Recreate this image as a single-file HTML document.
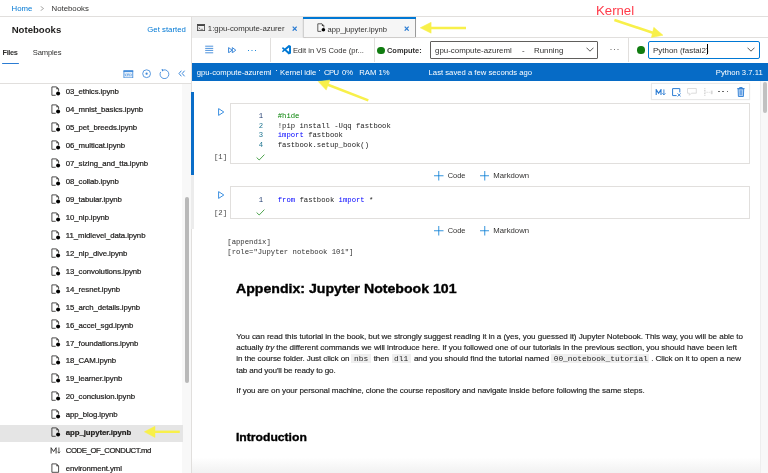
<!DOCTYPE html>
<html><head><meta charset="utf-8">
<style>
*{margin:0;padding:0;box-sizing:border-box}
html,body{width:768px;height:473px;overflow:hidden;background:#fff;font-family:"Liberation Sans",sans-serif;color:#323130}
.a{position:absolute;white-space:nowrap}
.wrap{position:absolute;left:0;top:0;width:768px;height:473px;will-change:transform;background:transparent}
.mono{font-family:"Liberation Mono",monospace}
.fl{font-size:7.8px;line-height:10px;color:#201f1e;letter-spacing:-0.08px;-webkit-text-stroke:0.22px #201f1e}
.code{font-family:"Liberation Mono",monospace;font-size:7.25px;line-height:9.5px;color:#222}
.ln{font-family:"Liberation Mono",monospace;font-size:7.25px;line-height:9.5px;color:#237893;text-align:right;width:12px}
.kw{color:#0000ff}
.cm{color:#008000}
.sb{font-size:7.7px;line-height:10px;color:#fff;margin-top:1.3px}
.md{font-size:8.1px;line-height:11px;color:#222;-webkit-text-stroke:0.15px #222}
.ic{font-family:"Liberation Mono",monospace;background:#efefef;padding:1px 3.3px;font-size:7.4px;letter-spacing:0.1px;-webkit-text-stroke:0}
</style></head><body><div class="wrap">
<!-- breadcrumb -->
<div class="a" style="left:11.5px;top:3.5px;font-size:7.8px;line-height:10px;color:#0078d4">Home</div>
<svg class="a" style="left:39.5px;top:5.7px" width="4.5" height="5" viewBox="0 0 4.5 5"><path d="M0.6 0.3L3.6 2.5L0.6 4.7" fill="none" stroke="#8a8886" stroke-width="0.7"/></svg>
<div class="a" style="left:51.5px;top:3.5px;font-size:7.8px;line-height:10px;color:#323130">Notebooks</div>
<div class="a" style="left:0;top:16px;width:768px;height:1px;background:#e1dfdd"></div>

<!-- sidebar -->
<div class="a" style="left:11.7px;top:23.8px;font-size:9.6px;line-height:12px;font-weight:bold;color:#201f1e">Notebooks</div>
<div class="a" style="left:147.3px;top:24.9px;font-size:7.8px;line-height:10px;color:#0078d4">Get started</div>
<div class="a" style="left:2.6px;top:48.3px;font-size:7.4px;line-height:10px;font-weight:bold;letter-spacing:-0.4px;color:#323130">Files</div>
<div class="a" style="left:32.8px;top:48.3px;font-size:7.6px;line-height:10px;color:#323130;letter-spacing:-0.15px">Samples</div>
<div class="a" style="left:2px;top:62.7px;width:16.5px;height:1.6px;background:#2b7cd3;border-radius:1px"></div>
<!-- sidebar icons -->
<svg class="a" style="left:123px;top:69.5px" width="10.5" height="8.5" viewBox="0 0 10.5 8.5"><rect x="0.9" y="0.9" width="8.9" height="7" fill="#e3eefa" stroke="#3b87d9" stroke-width="0.8"/><rect x="0.5" y="0.4" width="9.7" height="1.5" fill="#3b87d9"/><path d="M3.2 3.6L2 4.9L3.2 6.2M7.4 3.6L8.6 4.9L7.4 6.2M4.3 6.2V4.1H6.2V6.2" fill="none" stroke="#3b87d9" stroke-width="0.6"/></svg>
<svg class="a" style="left:141.5px;top:69.3px" width="9.5" height="9.5" viewBox="0 0 9.5 9.5"><circle cx="4.6" cy="4.7" r="3.9" fill="none" stroke="#3b87d9" stroke-width="0.85"/><circle cx="4.6" cy="4.7" r="1.1" fill="#3b87d9"/></svg>
<svg class="a" style="left:158.5px;top:68.8px" width="11" height="10.5" viewBox="0 0 11 10.5"><path d="M4.9 0.85A4.4 4.4 0 1 1 1.7 2.9" fill="none" stroke="#3b87d9" stroke-width="0.85"/><path d="M2.6 -0.2L5.2 0.9L3.1 2.6Z" fill="#3b87d9"/></svg>
<svg class="a" style="left:178.3px;top:70.3px" width="7.5" height="7" viewBox="0 0 7.5 7"><path d="M3.4 0.7L1 3.5L3.4 6.3M6.6 0.7L4.2 3.5L6.6 6.3" fill="none" stroke="#3b87d9" stroke-width="1"/></svg>
<div class="a" style="left:0;top:82.5px;width:191px;height:1px;background:#e1dfdd"></div>
<!-- sidebar scrollbar -->
<div class="a" style="left:182px;top:83.5px;width:8.5px;height:390px;background:#f8f8f8"></div>
<div class="a" style="left:184.8px;top:196.5px;width:4.3px;height:186px;background:#b9b9b9;border-radius:2px"></div>
<svg class="a" style="left:51px;top:86.1px" width="10" height="10" viewBox="0 0 10 10"><path d="M4.7 9.3H0.9V0.9H5.6L7.6 2.9V5.2" fill="none" stroke="#3b3a39" stroke-width="0.9"/><path d="M5.4 0.9L7.7 3.2H5.4Z" fill="#3b3a39"/><circle cx="7.1" cy="7.5" r="2" fill="#000"/></svg>
<div class="a fl" style="left:65.8px;top:87.2px;">03_ethics.ipynb</div>
<svg class="a" style="left:51px;top:104.1px" width="10" height="10" viewBox="0 0 10 10"><path d="M4.7 9.3H0.9V0.9H5.6L7.6 2.9V5.2" fill="none" stroke="#3b3a39" stroke-width="0.9"/><path d="M5.4 0.9L7.7 3.2H5.4Z" fill="#3b3a39"/><circle cx="7.1" cy="7.5" r="2" fill="#000"/></svg>
<div class="a fl" style="left:65.8px;top:105.2px;">04_mnist_basics.ipynb</div>
<svg class="a" style="left:51px;top:122.0px" width="10" height="10" viewBox="0 0 10 10"><path d="M4.7 9.3H0.9V0.9H5.6L7.6 2.9V5.2" fill="none" stroke="#3b3a39" stroke-width="0.9"/><path d="M5.4 0.9L7.7 3.2H5.4Z" fill="#3b3a39"/><circle cx="7.1" cy="7.5" r="2" fill="#000"/></svg>
<div class="a fl" style="left:65.8px;top:123.1px;">05_pet_breeds.ipynb</div>
<svg class="a" style="left:51px;top:140.0px" width="10" height="10" viewBox="0 0 10 10"><path d="M4.7 9.3H0.9V0.9H5.6L7.6 2.9V5.2" fill="none" stroke="#3b3a39" stroke-width="0.9"/><path d="M5.4 0.9L7.7 3.2H5.4Z" fill="#3b3a39"/><circle cx="7.1" cy="7.5" r="2" fill="#000"/></svg>
<div class="a fl" style="left:65.8px;top:141.1px;">06_multicat.ipynb</div>
<svg class="a" style="left:51px;top:157.9px" width="10" height="10" viewBox="0 0 10 10"><path d="M4.7 9.3H0.9V0.9H5.6L7.6 2.9V5.2" fill="none" stroke="#3b3a39" stroke-width="0.9"/><path d="M5.4 0.9L7.7 3.2H5.4Z" fill="#3b3a39"/><circle cx="7.1" cy="7.5" r="2" fill="#000"/></svg>
<div class="a fl" style="left:65.8px;top:159.0px;">07_sizing_and_tta.ipynb</div>
<svg class="a" style="left:51px;top:175.8px" width="10" height="10" viewBox="0 0 10 10"><path d="M4.7 9.3H0.9V0.9H5.6L7.6 2.9V5.2" fill="none" stroke="#3b3a39" stroke-width="0.9"/><path d="M5.4 0.9L7.7 3.2H5.4Z" fill="#3b3a39"/><circle cx="7.1" cy="7.5" r="2" fill="#000"/></svg>
<div class="a fl" style="left:65.8px;top:176.9px;">08_collab.ipynb</div>
<svg class="a" style="left:51px;top:193.8px" width="10" height="10" viewBox="0 0 10 10"><path d="M4.7 9.3H0.9V0.9H5.6L7.6 2.9V5.2" fill="none" stroke="#3b3a39" stroke-width="0.9"/><path d="M5.4 0.9L7.7 3.2H5.4Z" fill="#3b3a39"/><circle cx="7.1" cy="7.5" r="2" fill="#000"/></svg>
<div class="a fl" style="left:65.8px;top:194.9px;">09_tabular.ipynb</div>
<svg class="a" style="left:51px;top:211.8px" width="10" height="10" viewBox="0 0 10 10"><path d="M4.7 9.3H0.9V0.9H5.6L7.6 2.9V5.2" fill="none" stroke="#3b3a39" stroke-width="0.9"/><path d="M5.4 0.9L7.7 3.2H5.4Z" fill="#3b3a39"/><circle cx="7.1" cy="7.5" r="2" fill="#000"/></svg>
<div class="a fl" style="left:65.8px;top:212.8px;">10_nlp.ipynb</div>
<svg class="a" style="left:51px;top:229.7px" width="10" height="10" viewBox="0 0 10 10"><path d="M4.7 9.3H0.9V0.9H5.6L7.6 2.9V5.2" fill="none" stroke="#3b3a39" stroke-width="0.9"/><path d="M5.4 0.9L7.7 3.2H5.4Z" fill="#3b3a39"/><circle cx="7.1" cy="7.5" r="2" fill="#000"/></svg>
<div class="a fl" style="left:65.8px;top:230.8px;">11_midlevel_data.ipynb</div>
<svg class="a" style="left:51px;top:247.7px" width="10" height="10" viewBox="0 0 10 10"><path d="M4.7 9.3H0.9V0.9H5.6L7.6 2.9V5.2" fill="none" stroke="#3b3a39" stroke-width="0.9"/><path d="M5.4 0.9L7.7 3.2H5.4Z" fill="#3b3a39"/><circle cx="7.1" cy="7.5" r="2" fill="#000"/></svg>
<div class="a fl" style="left:65.8px;top:248.8px;">12_nlp_dive.ipynb</div>
<svg class="a" style="left:51px;top:265.6px" width="10" height="10" viewBox="0 0 10 10"><path d="M4.7 9.3H0.9V0.9H5.6L7.6 2.9V5.2" fill="none" stroke="#3b3a39" stroke-width="0.9"/><path d="M5.4 0.9L7.7 3.2H5.4Z" fill="#3b3a39"/><circle cx="7.1" cy="7.5" r="2" fill="#000"/></svg>
<div class="a fl" style="left:65.8px;top:266.7px;">13_convolutions.ipynb</div>
<svg class="a" style="left:51px;top:283.5px" width="10" height="10" viewBox="0 0 10 10"><path d="M4.7 9.3H0.9V0.9H5.6L7.6 2.9V5.2" fill="none" stroke="#3b3a39" stroke-width="0.9"/><path d="M5.4 0.9L7.7 3.2H5.4Z" fill="#3b3a39"/><circle cx="7.1" cy="7.5" r="2" fill="#000"/></svg>
<div class="a fl" style="left:65.8px;top:284.6px;">14_resnet.ipynb</div>
<svg class="a" style="left:51px;top:301.5px" width="10" height="10" viewBox="0 0 10 10"><path d="M4.7 9.3H0.9V0.9H5.6L7.6 2.9V5.2" fill="none" stroke="#3b3a39" stroke-width="0.9"/><path d="M5.4 0.9L7.7 3.2H5.4Z" fill="#3b3a39"/><circle cx="7.1" cy="7.5" r="2" fill="#000"/></svg>
<div class="a fl" style="left:65.8px;top:302.6px;">15_arch_details.ipynb</div>
<svg class="a" style="left:51px;top:319.4px" width="10" height="10" viewBox="0 0 10 10"><path d="M4.7 9.3H0.9V0.9H5.6L7.6 2.9V5.2" fill="none" stroke="#3b3a39" stroke-width="0.9"/><path d="M5.4 0.9L7.7 3.2H5.4Z" fill="#3b3a39"/><circle cx="7.1" cy="7.5" r="2" fill="#000"/></svg>
<div class="a fl" style="left:65.8px;top:320.6px;">16_accel_sgd.ipynb</div>
<svg class="a" style="left:51px;top:337.4px" width="10" height="10" viewBox="0 0 10 10"><path d="M4.7 9.3H0.9V0.9H5.6L7.6 2.9V5.2" fill="none" stroke="#3b3a39" stroke-width="0.9"/><path d="M5.4 0.9L7.7 3.2H5.4Z" fill="#3b3a39"/><circle cx="7.1" cy="7.5" r="2" fill="#000"/></svg>
<div class="a fl" style="left:65.8px;top:338.5px;">17_foundations.ipynb</div>
<svg class="a" style="left:51px;top:355.3px" width="10" height="10" viewBox="0 0 10 10"><path d="M4.7 9.3H0.9V0.9H5.6L7.6 2.9V5.2" fill="none" stroke="#3b3a39" stroke-width="0.9"/><path d="M5.4 0.9L7.7 3.2H5.4Z" fill="#3b3a39"/><circle cx="7.1" cy="7.5" r="2" fill="#000"/></svg>
<div class="a fl" style="left:65.8px;top:356.4px;">18_CAM.ipynb</div>
<svg class="a" style="left:51px;top:373.3px" width="10" height="10" viewBox="0 0 10 10"><path d="M4.7 9.3H0.9V0.9H5.6L7.6 2.9V5.2" fill="none" stroke="#3b3a39" stroke-width="0.9"/><path d="M5.4 0.9L7.7 3.2H5.4Z" fill="#3b3a39"/><circle cx="7.1" cy="7.5" r="2" fill="#000"/></svg>
<div class="a fl" style="left:65.8px;top:374.4px;">19_learner.ipynb</div>
<svg class="a" style="left:51px;top:391.2px" width="10" height="10" viewBox="0 0 10 10"><path d="M4.7 9.3H0.9V0.9H5.6L7.6 2.9V5.2" fill="none" stroke="#3b3a39" stroke-width="0.9"/><path d="M5.4 0.9L7.7 3.2H5.4Z" fill="#3b3a39"/><circle cx="7.1" cy="7.5" r="2" fill="#000"/></svg>
<div class="a fl" style="left:65.8px;top:392.3px;">20_conclusion.ipynb</div>
<svg class="a" style="left:51px;top:409.2px" width="10" height="10" viewBox="0 0 10 10"><path d="M4.7 9.3H0.9V0.9H5.6L7.6 2.9V5.2" fill="none" stroke="#3b3a39" stroke-width="0.9"/><path d="M5.4 0.9L7.7 3.2H5.4Z" fill="#3b3a39"/><circle cx="7.1" cy="7.5" r="2" fill="#000"/></svg>
<div class="a fl" style="left:65.8px;top:410.3px;">app_blog.ipynb</div>
<div class="a" style="left:0;top:424.6px;width:182.5px;height:17px;background:#e5e5e5"></div>
<svg class="a" style="left:51px;top:427.1px" width="10" height="10" viewBox="0 0 10 10"><path d="M4.7 9.3H0.9V0.9H5.6L7.6 2.9V5.2" fill="none" stroke="#3b3a39" stroke-width="0.9"/><path d="M5.4 0.9L7.7 3.2H5.4Z" fill="#3b3a39"/><circle cx="7.1" cy="7.5" r="2" fill="#000"/></svg>
<div class="a fl" style="left:65.8px;top:428.2px;font-weight:bold;">app_jupyter.ipynb</div>
<svg class="a" style="left:50px;top:447.0px" width="11" height="7" viewBox="0 0 11 7"><path d="M1.1 6.5V0.7L3.6 4.6L6.1 0.7V6.5" fill="none" stroke="#3b3a39" stroke-width="1"/><path d="M8.9 0.5V6M7.6 4.7L8.9 6.2L10.2 4.7" fill="none" stroke="#3b3a39" stroke-width="0.8"/></svg>
<div class="a fl" style="left:65.8px;top:446.2px;letter-spacing:-0.45px;">CODE_OF_CONDUCT.md</div>
<svg class="a" style="left:51px;top:463.0px" width="10" height="10" viewBox="0 0 10 10"><path d="M0.9 0.9H5.6L7.6 2.9V9.3H0.9Z" fill="none" stroke="#3b3a39" stroke-width="0.9"/><path d="M5.4 0.9L7.7 3.2H5.4Z" fill="#3b3a39"/></svg>
<div class="a fl" style="left:65.8px;top:464.1px;">environment.yml</div>
<div class="a" style="left:191px;top:16px;width:1px;height:457px;background:#e1dfdd"></div>

<!-- tabs -->
<div class="a" style="left:192px;top:16.5px;width:576px;height:21px;background:#fff;border-bottom:1px solid #e1dfdd"></div>
<div class="a" style="left:191.5px;top:16.5px;width:111px;height:21px;background:#f0f0f0"></div>
<svg class="a" style="left:196.8px;top:24.2px" width="8" height="7" viewBox="0 0 8 7"><rect x="0.4" y="0.4" width="7.2" height="6.2" fill="none" stroke="#444" stroke-width="0.8"/><rect x="0.4" y="0.4" width="7.2" height="1.6" fill="#444"/><path d="M1.6 3.4L2.8 4.3L1.6 5.2M3.5 5.3H6" fill="none" stroke="#444" stroke-width="0.6"/></svg>
<div class="a" style="left:207.8px;top:24.4px;font-size:7.8px;line-height:10px;color:#323130">1:gpu-compute-azurer</div>
<svg class="a" style="left:291.7px;top:26px" width="5.4" height="5.4" viewBox="0 0 5.4 5.4"><path d="M0.7 0.7L4.7 4.7M4.7 0.7L0.7 4.7" stroke="#2b7cd3" stroke-width="1.2"/></svg>
<div class="a" style="left:303px;top:17px;width:112.5px;height:20px;background:#f6f6f6;border-left:1px solid #d0d0d0;border-right:1px solid #9a9a9a;box-shadow:-0.5px 0.5px 1.5px rgba(0,0,0,0.25)"></div>
<div class="a" style="left:303px;top:17px;width:112.5px;height:1.6px;background:#0078d4"></div>
<svg class="a" style="left:316.5px;top:23.4px" width="9" height="9" viewBox="0 0 10 10"><path d="M4.7 9.3H0.9V0.9H5.6L7.6 2.9V5.2" fill="none" stroke="#3b3a39" stroke-width="0.9"/><path d="M5.4 0.9L7.7 3.2H5.4Z" fill="#3b3a39"/><circle cx="7.1" cy="7.5" r="2" fill="#000"/></svg>
<div class="a" style="left:327.5px;top:24.8px;font-size:7.6px;line-height:10px;color:#323130">app_jupyter.ipynb</div>
<svg class="a" style="left:404.3px;top:26px" width="5.4" height="5.4" viewBox="0 0 5.4 5.4"><path d="M0.7 0.7L4.7 4.7M4.7 0.7L0.7 4.7" stroke="#2b7cd3" stroke-width="1.2"/></svg>

<!-- toolbar -->
<svg class="a" style="left:205px;top:45px" width="8.5" height="9" viewBox="0 0 8.5 9"><path d="M0.2 1.2H8.2M0.2 3.4H8.2M0.2 5.4H8.2M0.2 7.8H8.2" stroke="#3b87d9" stroke-width="0.9"/></svg>
<svg class="a" style="left:228px;top:46.7px" width="8.5" height="6.5" viewBox="0 0 8.5 6.5"><path d="M0.6 0.6L4.1 3.2L0.6 5.8Z M4.3 0.6L7.8 3.2L4.3 5.8Z" fill="none" stroke="#3b87d9" stroke-width="1"/></svg>
<div class="a" style="left:247px;top:44.8px;font-size:9px;line-height:10px;color:#0078d4;letter-spacing:0.5px">&#183;&#183;&#183;</div>
<div class="a" style="left:270px;top:38px;width:1px;height:24px;background:#e1dfdd"></div>
<svg class="a" style="left:281.8px;top:45.3px" width="9.4" height="9.4" viewBox="0 0 24 24"><path d="M23.15 2.59L18.21 0.21a1.49 1.49 0 0 0-1.7.29L7.04 9.13 2.93 6.01a1 1 0 0 0-1.270.06L0.34 7.26a1 1 0 0 0 0 1.48L3.9 12 0.34 15.26a1 1 0 0 0 0 1.48l1.32 1.2a1 1 0 0 0 1.27.06l4.11-3.12 9.47 8.63a1.49 1.49 0 0 0 1.7.29l4.94-2.38A1.5 1.5 0 0 0 24 20.06V3.94a1.5 1.5 0 0 0-.85-1.350zM18 17.45L10.82 12 18 6.55z" fill="#0078d4"/></svg>
<div class="a" style="left:293px;top:46px;font-size:7.6px;line-height:10px;color:#323130">Edit in VS Code (pr...</div>
<div class="a" style="left:374px;top:38px;width:1px;height:24px;background:#e1dfdd"></div>
<div class="a" style="left:377px;top:46.5px;width:7.7px;height:7.7px;border-radius:50%;background:#107c10"></div>
<div class="a" style="left:387px;top:46px;font-size:7.45px;line-height:10px;font-weight:bold;color:#323130">Compute:</div>
<div class="a" style="left:430px;top:41px;width:167.5px;height:17.7px;border:1px solid #605e5c;border-radius:1px"></div>
<div class="a" style="left:435px;top:45.5px;font-size:7.9px;line-height:10px;color:#323130">gpu-compute-azureml</div><div class="a" style="left:522px;top:45.5px;font-size:7.9px;line-height:10px;color:#323130">-</div><div class="a" style="left:534px;top:45.5px;font-size:7.9px;line-height:10px;color:#323130">Running</div>
<svg class="a" style="left:585.5px;top:47px" width="8" height="5" viewBox="0 0 8 5"><path d="M0.5 0.7L4 4.2L7.5 0.7" fill="none" stroke="#323130" stroke-width="0.8"/></svg>
<div class="a" style="left:609.5px;top:44px;font-size:9px;line-height:10px;color:#605e5c;letter-spacing:0.5px">&#183;&#183;&#183;</div>
<div class="a" style="left:628.3px;top:38px;width:1px;height:24px;background:#e1dfdd"></div>
<div class="a" style="left:637.3px;top:46.2px;width:7.7px;height:7.7px;border-radius:50%;background:#107c10"></div>
<div class="a" style="left:647.9px;top:40.5px;width:112px;height:18px;border:1.5px solid #0078d4;border-radius:2px;background:#fff"></div>
<div class="a" style="left:653px;top:45.5px;font-size:7.95px;line-height:10px;color:#323130">Python (fastai2)</div>
<div class="a" style="left:706.5px;top:44px;width:0.8px;height:10px;background:#000"></div>
<svg class="a" style="left:747px;top:47px" width="8" height="5" viewBox="0 0 8 5"><path d="M0.5 0.7L4 4.2L7.5 0.7" fill="none" stroke="#323130" stroke-width="0.8"/></svg>

<!-- status bar -->
<div class="a" style="left:192px;top:62.7px;width:576px;height:18px;background:#066bc6"></div>
<div class="a sb" style="left:196.8px;top:66.8px">gpu-compute-azureml</div>
<div class="a" style="left:276px;top:70px;width:1.2px;height:1.2px;background:#dfeaf6"></div>
<div class="a sb" style="left:280px;top:66.8px">Kernel idle</div>
<div class="a" style="left:319.3px;top:70px;width:1.2px;height:1.2px;background:#dfeaf6"></div>
<div class="a sb" style="left:324px;top:66.8px;letter-spacing:-0.6px">CPU</div><div class="a sb" style="left:342px;top:66.8px">0%</div><div class="a sb" style="left:359.3px;top:66.8px">RAM</div><div class="a sb" style="left:378.5px;top:66.8px">1%</div>
<div class="a sb" style="left:428.6px;top:66.8px">Last saved a few seconds ago</div>
<div class="a sb" style="left:715.8px;top:66.8px">Python 3.7.11</div>

<!-- notebook scrollbar -->
<div class="a" style="left:759.8px;top:80.5px;width:8.2px;height:393px;background:#f8f8f8;border-left:1px solid #eee"></div>
<div class="a" style="left:763.3px;top:81.7px;width:3.4px;height:31px;background:#c1c1c1;border-radius:2px"></div>

<!-- cell gutter -->
<div class="a" style="left:191.4px;top:91.8px;width:2.6px;height:83px;background:#0a6dc8"></div>
<div class="a" style="left:191.4px;top:174.8px;width:2.6px;height:54px;background:#ececec"></div>

<!-- cell toolbar -->
<div class="a" style="left:651px;top:83.3px;width:99px;height:16.9px;border:1px solid #e8e8e8;background:#fff;box-shadow:0 0 1px rgba(0,0,0,0.08)"></div>
<svg class="a" style="left:655px;top:88.5px" width="11" height="6.5" viewBox="0 0 11 6.5"><path d="M1.2 6.2V0.6L3.6 4.2L6 0.6V6.2" fill="none" stroke="#2b7cd3" stroke-width="1.1"/><path d="M8.9 0.4V5.6M7.4 4.3L8.9 5.9L10.4 4.3" fill="none" stroke="#2b7cd3" stroke-width="0.9"/></svg>
<svg class="a" style="left:671.6px;top:87.5px" width="9.5" height="9" viewBox="0 0 9.5 9"><path d="M4.6 7.6H0.6V0.6H7.8V4.4" fill="none" stroke="#2b7cd3" stroke-width="1"/><path d="M5.6 5.4L8.7 8.5M8.7 5.4L5.6 8.5" stroke="#2b7cd3" stroke-width="0.9"/></svg>
<svg class="a" style="left:687px;top:87.8px" width="10" height="8" viewBox="0 0 10 8"><path d="M0.5 0.5H9.3V5.2H4.4L2.3 7.3V5.2H0.5Z" fill="none" stroke="#d4d4d4" stroke-width="0.8"/></svg>
<svg class="a" style="left:702.5px;top:87.5px" width="10" height="8.5" viewBox="0 0 10 8.5"><path d="M1.8 0.3V8.2" stroke="#d4d4d4" stroke-width="1.4" stroke-dasharray="1 0.6"/><path d="M2.6 4.3H7.6" stroke="#d4d4d4" stroke-width="0.8" stroke-dasharray="1 0.6"/><rect x="7.8" y="2.6" width="1.8" height="3.6" fill="#d8d8d8"/></svg>
<div class="a" style="left:718.3px;top:91px;width:1.4px;height:1.4px;background:#6a6a6a"></div>
<div class="a" style="left:722.4px;top:91px;width:1.4px;height:1.4px;background:#6a6a6a"></div>
<div class="a" style="left:726.5px;top:91px;width:1.4px;height:1.4px;background:#6a6a6a"></div>
<svg class="a" style="left:736.8px;top:86.8px" width="7.8" height="10" viewBox="0 0 7.8 10"><path d="M0.2 1.6H7.6M2.6 1.6V0.5H5.2V1.6" fill="none" stroke="#2b7cd3" stroke-width="0.9"/><path d="M1.1 1.9H6.7L6.4 9.5H1.4Z" fill="#bcd7f5" stroke="#2b7cd3" stroke-width="0.9"/><rect x="2.6" y="3.2" width="2.6" height="5" fill="#6ea6e6"/></svg>
<!-- cell 1 -->
<div class="a" style="left:230px;top:103.2px;width:519.5px;height:60.4px;border:1px solid #e1dfdd"></div>
<svg class="a" style="left:217.8px;top:108px" width="6.5" height="8" viewBox="0 0 6.5 8"><path d="M0.6 0.6L5.8 4L0.6 7.4Z" fill="none" stroke="#3b8fe0" stroke-width="1"/></svg>
<div class="a ln" style="left:251px;top:112.2px;color:#1e3a6e">1</div>
<div class="a ln" style="left:251px;top:121.7px">2</div>
<div class="a ln" style="left:251px;top:131.2px">3</div>
<div class="a ln" style="left:251px;top:140.7px">4</div>
<div class="a code" style="left:277.7px;top:112.2px"><span class="cm">#hide</span></div>
<div class="a code" style="left:277.7px;top:121.7px">!pip install -Uqq fastbook</div>
<div class="a code" style="left:277.7px;top:131.2px"><span class="kw">import</span> fastbook</div>
<div class="a code" style="left:277.7px;top:140.7px">fastbook.setup_book()</div>
<div class="a code" style="left:214px;top:152.5px;color:#444">[1]</div>
<svg class="a" style="left:255.5px;top:153.5px" width="9" height="7" viewBox="0 0 9 7"><path d="M0.6 3.5L3.2 6L8.4 0.6" fill="none" stroke="#3a9a3a" stroke-width="0.9"/></svg>

<!-- add row 1 -->
<svg class="a" style="left:434px;top:171px" width="9.5" height="9.5" viewBox="0 0 9.5 9.5"><path d="M4.75 0V9.5M0 4.75H9.5" stroke="#0078d4" stroke-width="0.8"/></svg>
<div class="a" style="left:447.7px;top:171px;font-size:7.45px;line-height:10px;color:#323130">Code</div>
<svg class="a" style="left:479.7px;top:171px" width="9.5" height="9.5" viewBox="0 0 9.5 9.5"><path d="M4.75 0V9.5M0 4.75H9.5" stroke="#0078d4" stroke-width="0.8"/></svg>
<div class="a" style="left:493.3px;top:171px;font-size:7.75px;line-height:10px;color:#323130">Markdown</div>

<!-- cell 2 -->
<div class="a" style="left:230px;top:186.3px;width:519.5px;height:32.4px;border:1px solid #e1dfdd"></div>
<svg class="a" style="left:217.8px;top:191.3px" width="6.5" height="8" viewBox="0 0 6.5 8"><path d="M0.6 0.6L5.8 4L0.6 7.4Z" fill="none" stroke="#3b8fe0" stroke-width="1"/></svg>
<div class="a ln" style="left:251px;top:195.6px;color:#1e3a6e">1</div>
<div class="a code" style="left:277.7px;top:195.6px"><span class="kw">from</span> fastbook <span class="kw">import</span> *</div>
<div class="a code" style="left:214px;top:208.6px;color:#444">[2]</div>
<svg class="a" style="left:255.5px;top:208.6px" width="9" height="7" viewBox="0 0 9 7"><path d="M0.6 3.5L3.2 6L8.4 0.6" fill="none" stroke="#3a9a3a" stroke-width="0.9"/></svg>

<!-- add row 2 -->
<svg class="a" style="left:434px;top:226px" width="9.5" height="9.5" viewBox="0 0 9.5 9.5"><path d="M4.75 0V9.5M0 4.75H9.5" stroke="#0078d4" stroke-width="0.8"/></svg>
<div class="a" style="left:447.7px;top:226px;font-size:7.45px;line-height:10px;color:#323130">Code</div>
<svg class="a" style="left:479.7px;top:226px" width="9.5" height="9.5" viewBox="0 0 9.5 9.5"><path d="M4.75 0V9.5M0 4.75H9.5" stroke="#0078d4" stroke-width="0.8"/></svg>
<div class="a" style="left:493.3px;top:226px;font-size:7.75px;line-height:10px;color:#323130">Markdown</div>

<!-- markdown -->
<div class="a code" style="left:227.3px;top:237.5px;font-size:7.25px;color:#333">[appendix]</div>
<div class="a code" style="left:227.3px;top:247.6px;font-size:7.25px;color:#333">[role="Jupyter notebook 101"]</div>
<div class="a" style="left:236.2px;top:281.9px;font-size:12.5px;line-height:15px;font-weight:bold;color:#000;transform:scaleX(1.13);transform-origin:0 0;-webkit-text-stroke:0.35px #000">Appendix: Jupyter Notebook 101</div>
<div class="a md" style="left:236.3px;top:331px;letter-spacing:-0.077px">You can read this tutorial in the book, but we strongly suggest reading it in a (yes, you guessed it) Jupyter Notebook. This way, you will be able to</div>
<div class="a md" style="left:236.3px;top:342px;letter-spacing:-0.068px">actually <i>try</i> the different commands we will introduce here. If you followed one of our tutorials in the previous section, you should have been left</div>
<div class="a md" style="left:236.3px;top:353px;letter-spacing:-0.11px">in the course folder. Just click on</div>
<div class="a" style="left:351.4px;top:354.3px;width:19.6px;height:9px;background:#efefef"></div>
<div class="a mono" style="left:354px;top:353px;font-size:7.87px;line-height:11px;color:#222">nbs</div>
<div class="a md" style="left:373.8px;top:353px;letter-spacing:-0.2px">then</div>
<div class="a" style="left:391.5px;top:354.3px;width:19.6px;height:9px;background:#efefef"></div>
<div class="a mono" style="left:394.1px;top:353px;font-size:7.87px;line-height:11px;color:#222">dl1</div>
<div class="a md" style="left:413.9px;top:353px;letter-spacing:-0.05px">and you should find the tutorial named</div>
<div class="a" style="left:551.1px;top:354.3px;width:98.4px;height:9px;background:#efefef"></div>
<div class="a mono" style="left:553.7px;top:353px;font-size:7.87px;line-height:11px;color:#222">00_notebook_tutorial</div>
<div class="a md" style="left:651.2px;top:353px;letter-spacing:-0.11px">. Click on it to open a new</div>
<div class="a md" style="left:236.3px;top:364.5px;letter-spacing:-0.15px">tab and you'll be ready to go.</div>
<div class="a md" style="left:236.3px;top:384.5px;letter-spacing:-0.11px">If you are on your personal machine, clone the course repository and navigate inside before following the same steps.</div>
<div class="a" style="left:236.2px;top:430.5px;font-size:10.7px;line-height:13px;font-weight:bold;color:#000;transform:scaleX(1.136);transform-origin:0 0;-webkit-text-stroke:0.35px #000">Introduction</div>
<div class="a" style="left:192px;top:458px;width:568px;height:15px;background:linear-gradient(to bottom,rgba(242,242,242,0),rgba(242,242,242,1))"></div>

<!-- annotations -->
<div class="a" style="left:596px;top:3px;font-size:13.2px;line-height:15px;color:#ff3b4a">Kernel</div>
<svg class="a" style="left:0;top:0" width="768" height="473" viewBox="0 0 768 473">
<g fill="#f8f04a" stroke="#f8f04a">
<path d="M614.4 20L655 33.5" stroke-width="2.5"/>
<path d="M663 35.2L653.8 27.3L651.4 37.5Z" stroke-width="0.5"/>
<path d="M466 27.9H428" stroke-width="2.5"/>
<path d="M420.2 27.8L431.1 22.3V33.2Z" stroke-width="0.5"/>
<path d="M368.3 100.4L326 84" stroke-width="2.5"/>
<path d="M318.2 81.5L330 80.1L326.2 90.1Z" stroke-width="0.5"/>
<path d="M179.8 431.8H153" stroke-width="2.4"/>
<path d="M144.4 431.8L155 426.3V437.4Z" stroke-width="0.5"/>
</g></svg>
</div></body></html>
